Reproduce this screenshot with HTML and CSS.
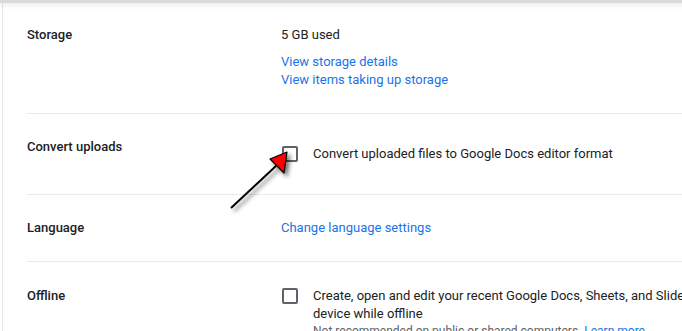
FILE: index.html
```html
<!DOCTYPE html>
<html>
<head>
<meta charset="utf-8">
<link rel="stylesheet" href="styles.css">
</head>
<body>
<div class="page">
  <div class="topbar"></div>
  <div class="panel">
    <div class="row row-storage">
      <div class="label">Storage</div>
      <div class="value">
        <div class="text">5 GB used</div>
        <div class="links">
          <a class="link">View storage details</a>
          <a class="link">View items taking up storage</a>
        </div>
      </div>
    </div>
    <div class="row row-convert">
      <div class="label">Convert uploads</div>
      <div class="value">
        <div class="check">
          <span class="box"></span>
          <span class="text">Convert uploaded files to Google Docs editor format</span>
        </div>
      </div>
    </div>
    <div class="row row-language">
      <div class="label">Language</div>
      <div class="value">
        <a class="link">Change language settings</a>
      </div>
    </div>
    <div class="row row-offline">
      <div class="label">Offline</div>
      <div class="value">
        <div class="check">
          <span class="box"></span>
          <div class="check-body">
            <span class="text wrap">Create, open and edit your recent Google Docs, Sheets, and Slides files on this device while offline</span>
            <span class="note">Not recommended on public or shared computers. <a class="link small">Learn more</a></span>
          </div>
        </div>
      </div>
    </div>
  </div>
  <svg class="arrow" width="682" height="331" viewBox="0 0 682 331">
    <defs>
      <filter id="sh" x="-20%" y="-20%" width="160%" height="160%">
        <feDropShadow dx="3" dy="3" stdDeviation="2" flood-color="#000" flood-opacity="0.55"/>
      </filter>
    </defs>
    <g filter="url(#sh)">
      <line x1="231" y1="208" x2="277" y2="165" stroke="#000" stroke-width="2"/>
      <polygon points="287,152 270,159 284,173" fill="#ff0000" stroke="#000" stroke-width="1.2" stroke-linejoin="round"/>
    </g>
  </svg>
</div>
</body>
</html>
```
FILE: styles.css
```css
html, body {
  margin: 0;
  padding: 0;
  background: #fff;
  overflow: hidden;
}
body {
  font-family: Roboto, "Liberation Sans", Arial, sans-serif;
  color: #202124;
  font-size: 13px;
}
.page {
  position: relative;
  width: 900px;
  height: 331px;
  overflow: hidden;
}
.topbar {
  height: 3px;
  background: #d9d9d9;
  box-shadow: 0 2px 5px rgba(0,0,0,0.12);
  position: relative;
  z-index: 1;
}
.panel {
  margin-left: 2px;
  border-left: 1px solid #e6e6e6;
  padding-left: 24px;
  height: 400px;
}
.row {
  display: grid;
  grid-template-columns: 254px 1fr;
  border-bottom: 1px solid #e8eaed;
  line-height: 18px;
}
.label {
  font-weight: 500;
  color: #202124;
}
.row-storage { padding: 23px 0 24px; }
.row-convert { padding: 24px 0 31px; }
.row-language { padding: 24px 0 24px; }
.row-offline { padding: 25px 0 0; border-bottom: none; }
.links {
  display: flex;
  flex-direction: column;
  margin-top: 9px;
}
.link {
  color: #1a73e8;
  text-decoration: none;
}
.row-convert .value { padding-top: 7px; }
.check {
  display: flex;
  align-items: flex-start;
  gap: 15px;
}
.box {
  flex: none;
  width: 12px;
  height: 12px;
  border: 2px solid #5f6368;
  border-radius: 2px;
  margin-left: 1px;
  margin-top: 1px;
}
.check-body {
  display: flex;
  flex-direction: column;
  width: 455px;
}
.note {
  font-size: 12px;
  color: #5f6368;
  line-height: 16px;
  margin-top: 0;
}
.arrow {
  position: absolute;
  left: 0;
  top: 0;
  pointer-events: none;
}
```
